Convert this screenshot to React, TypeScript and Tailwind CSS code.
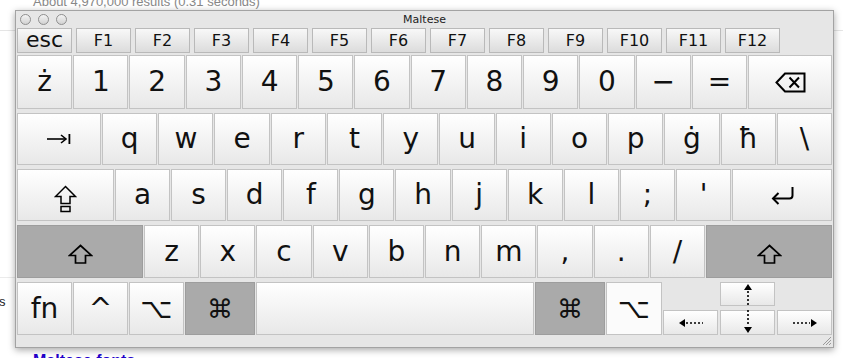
import React from 'react'

const keyBase =
  'flex items-center justify-center border border-[#c3c3c3] bg-linear-to-b from-[#ffffff] to-[#e8e8e8] text-[#111] leading-none'
const keyDark = 'flex items-center justify-center border border-[#9d9d9d] bg-[#aaaaaa] text-[#111] leading-none'
const fKey =
  'w-[55px] flex items-center justify-center border border-[#b9b9b9] bg-linear-to-b from-[#f8f8f8] to-[#dcdcdc] text-[16px] text-[#111] leading-none'

function Key({ label, className = 'flex-1' }: { label: React.ReactNode; className?: string }) {
  return <div className={`${keyBase} ${className} text-[28px]`}>{label}</div>
}

function TabIcon() {
  return (
    <svg width="25" height="12" viewBox="0 0 25 12">
      <path d="M0 6H19" stroke="#000" strokeWidth="1.6" />
      <path d="M14 2L19 6L14 10" stroke="#000" strokeWidth="1.6" fill="none" />
      <rect x="21.5" y="1" width="1.8" height="10" fill="#000" />
    </svg>
  )
}

function CapsIcon() {
  return (
    <svg width="23" height="28" viewBox="0 0 23 28" className="mt-[7px]">
      <path d="M11.5 1.5L21.5 11.5H16V18.5H7V11.5H1.5Z" stroke="#000" strokeWidth="1.5" fill="none" strokeLinejoin="miter" />
      <rect x="7" y="21.5" width="9" height="5" stroke="#000" strokeWidth="1.5" fill="none" />
    </svg>
  )
}

function ShiftIcon() {
  return (
    <svg width="25" height="21" viewBox="0 0 25 21" className="mt-[6px]">
      <path d="M12.5 1.5L23.5 11.5H17.5V19H7.5V11.5H1.5Z" stroke="#000" strokeWidth="1.7" fill="none" />
    </svg>
  )
}

function ReturnIcon() {
  return (
    <svg width="25" height="19" viewBox="0 0 25 19">
      <path d="M22.5 1V9.5Q22.5 12.5 19.5 12.5H3" stroke="#000" strokeWidth="2" fill="none" />
      <path d="M8.5 7L3 12.5L8.5 18" stroke="#000" strokeWidth="2" fill="none" />
    </svg>
  )
}

function BackspaceIcon() {
  return (
    <svg width="31" height="21" viewBox="0 0 31 21">
      <path d="M1.5 10.5L10 1.5H29.5V19.5H10Z" stroke="#000" strokeWidth="2" fill="none" strokeLinejoin="miter" />
      <path d="M14.5 5.5L24 15.5M24 5.5L14.5 15.5" stroke="#000" strokeWidth="2" />
    </svg>
  )
}

function ArrowH({ dir }: { dir: 'left' | 'right' }) {
  return (
    <svg width="24" height="10" viewBox="0 0 24 10">
      {dir === 'left' ? (
        <>
          <path d="M0 5L6 1V9Z" fill="#000" />
          <path d="M7 5H24" stroke="#000" strokeWidth="1.6" strokeDasharray="2 2" />
        </>
      ) : (
        <>
          <path d="M0 5H17" stroke="#000" strokeWidth="1.6" strokeDasharray="2 2" />
          <path d="M24 5L18 1V9Z" fill="#000" />
        </>
      )}
    </svg>
  )
}

const row = 'flex gap-[1px]'

export default function App() {
  const num = ['ż', '1', '2', '3', '4', '5', '6', '7', '8', '9', '0', '−', '=']
  const qrow = ['q', 'w', 'e', 'r', 't', 'y', 'u', 'i', 'o', 'p', 'ġ', 'ħ', '\\']
  const arow = ['a', 's', 'd', 'f', 'g', 'h', 'j', 'k', 'l', ';', "'"]
  const zrow = ['z', 'x', 'c', 'v', 'b', 'n', 'm', ',', '.', '/']
  const fkeys = ['F1', 'F2', 'F3', 'F4', 'F5', 'F6', 'F7', 'F8', 'F9', 'F10', 'F11', 'F12']

  return (
    <div className="relative w-[843px] h-[358px] overflow-hidden bg-white font-['Liberation_Sans',Arial,sans-serif]">
      {/* page behind the window */}
      <div className="mt-[-6px] pl-[33px] text-[13px] leading-[16px] text-[#888]">About 4,970,000 results (0.31 seconds)</div>
      <div className="mt-[20px] h-px bg-[#e5e5e5]" />
      <div className="mt-[246px] h-px w-[300px] bg-[#ebebeb]" />
      <div className="mt-[16px] text-[13px] leading-[16px] text-[#222] ml-[-1px]">s</div>
      <div className="mt-[41px] pl-[33px] text-[16px] font-bold leading-[20px] text-[#2200cc]">Maltese fonts</div>

      {/* keyboard viewer window */}
      <div className="absolute left-[15px] top-[10px] w-[819px] h-[338px] border border-[#a3a3a3] bg-[#e6e6e6] shadow-[0_2px_7px_rgba(0,0,0,0.35)] flex flex-col font-['DejaVu_Sans',sans-serif]">
        <div className="relative h-[16px] flex items-center justify-center">
          <div className="absolute left-[4px] top-[3px] flex gap-[7px]">
            <div className="w-[11px] h-[11px] rounded-full border border-[#8f8f8f] bg-linear-to-b from-[#f4f4f4] to-[#d2d2d2]" />
            <div className="w-[11px] h-[11px] rounded-full border border-[#8f8f8f] bg-linear-to-b from-[#f4f4f4] to-[#d2d2d2]" />
            <div className="w-[11px] h-[11px] rounded-full border border-[#8f8f8f] bg-linear-to-b from-[#f4f4f4] to-[#d2d2d2]" />
          </div>
          <span className="text-[11px] text-[#222] mt-[3px]">Maltese</span>
        </div>

        <div className="flex flex-col px-[1px] pt-[1px]">
          <div className="flex gap-[4px] h-[25px]">
            <div className={`${fKey} text-[22px] pb-[2px]`}>esc</div>
            {fkeys.map((f) => (
              <div key={f} className={fKey}>
                {f}
              </div>
            ))}
          </div>

          <div className="mt-[2px] flex flex-col gap-[4px]">
            <div className={`${row} h-[54px]`}>
              {num.map((k) => (
                <Key key={k} label={k} />
              ))}
              <Key className="w-[84px]" label={<BackspaceIcon />} />
            </div>

            <div className={`${row} h-[52px]`}>
              <Key className="w-[84px]" label={<TabIcon />} />
              {qrow.map((k) => (
                <Key key={k} label={k} />
              ))}
            </div>

            <div className={`${row} h-[52px]`}>
              <Key className="w-[97px]" label={<CapsIcon />} />
              {arow.map((k) => (
                <Key key={k} label={k} />
              ))}
              <Key className="w-[100px]" label={<ReturnIcon />} />
            </div>

            <div className={`${row} h-[53px]`}>
              <div className={`${keyDark} w-[126px]`}>
                <ShiftIcon />
              </div>
              {zrow.map((k) => (
                <Key key={k} label={k} />
              ))}
              <div className={`${keyDark} w-[126px]`}>
                <ShiftIcon />
              </div>
            </div>

            <div className={`${row} h-[53px]`}>
              <Key className="w-[55px]" label="fn" />
              <Key className="w-[55px]" label="^" />
              <Key className="w-[55px]" label="⌥" />
              <div className={`${keyDark} w-[70px] text-[26px]`}>⌘</div>
              <Key label="" />
              <div className={`${keyDark} w-[70px] text-[26px]`}>⌘</div>
              <div className="w-[56px] flex items-center justify-center border border-[#c3c3c3] bg-[#fbfbfb] text-[28px] text-[#111] leading-none">⌥</div>
              <div className="w-[169px] flex flex-col gap-[4px]">
                <div className="h-[24px] flex justify-center">
                  <div className={`${keyBase} w-[55px] items-start`}>
                    <svg width="10" height="22" viewBox="0 0 10 22" className="mt-[1px]">
                      <path d="M5 0L9 6H1Z" fill="#000" />
                      <path d="M5 7V22" stroke="#000" strokeWidth="1.6" strokeDasharray="2 2" />
                    </svg>
                  </div>
                </div>
                <div className="h-[25px] flex gap-[2px]">
                  <div className={`${keyBase} flex-1`}>
                    <ArrowH dir="left" />
                  </div>
                  <div className={`${keyBase} flex-1 items-end`}>
                    <svg width="10" height="23" viewBox="0 0 10 23" className="mb-[1px]">
                      <path d="M5 0V16" stroke="#000" strokeWidth="1.6" strokeDasharray="2 2" />
                      <path d="M5 23L9 17H1Z" fill="#000" />
                    </svg>
                  </div>
                  <div className={`${keyBase} flex-1`}>
                    <ArrowH dir="right" />
                  </div>
                </div>
              </div>
            </div>
          </div>
        </div>

        <div className="relative flex-1">
          <svg width="11" height="11" viewBox="0 0 11 11" className="absolute right-[1px] bottom-[1px]">
            <path d="M10 2L2 10M10 5L5 10M10 8L8 10" stroke="#9a9a9a" strokeWidth="1" />
          </svg>
        </div>
      </div>
    </div>
  )
}
